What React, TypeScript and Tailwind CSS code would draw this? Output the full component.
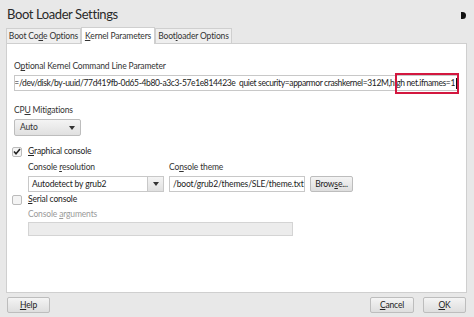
import React from "react";

const U = ({ children }: { children: React.ReactNode }) => (
  <span className="underline underline-offset-[1px]">{children}</span>
);

const Arrow = () => (
  <svg width="6" height="4" viewBox="0 0 6 4" className="fill-[#333]">
    <path d="M0 0h6L3 4z" />
  </svg>
);

const Check = () => (
  <svg width="8" height="7" viewBox="0 0 8 7" fill="none" stroke="#222" strokeWidth="1.6">
    <path d="M1 3.5l2 2.2L7 1" />
  </svg>
);

const Button = ({ children, w }: { children: React.ReactNode; w: string }) => (
  <div
    className={`${w} flex h-[16px] items-center justify-center rounded-[2px] border border-[#bdbdbd] bg-gradient-to-b from-[#f4f4f4] to-[#dedede] text-[#222]`}
  >
    {children}
  </div>
);

export default function App() {
  return (
    <div className="flex h-[317px] w-[474px] flex-col overflow-hidden bg-[#e8e8e8] font-['Lato',sans-serif] text-[8.5px] tracking-[-0.15px] text-[#333]">
      {/* title */}
      <div className="flex h-[27px] items-center justify-between pl-[7px] pr-[8px] pt-[3px]">
        <span className="text-[13px] tracking-[-0.4px] text-[#2a2a2a]">Boot Loader Settings</span>
        <div className="h-[7px] w-[5px] rounded-r-full bg-[#111]" />
      </div>

      {/* tabs */}
      <div className="flex h-[16px] items-end pl-[6px] leading-[11px] text-[#333]">
        <div className="flex h-[15px] w-[75px] items-center justify-center border border-b-0 border-[#cfcfcf] bg-[#efefef]">
          Boot Co<U>d</U>e Options
        </div>
        <div className="z-10 -mb-px flex h-[17px] w-[74px] items-center justify-center border border-b-0 border-[#cfcfcf] bg-white">
          <U>K</U>ernel Parameters
        </div>
        <div className="flex h-[15px] w-[77px] items-center justify-center border border-b-0 border-[#cfcfcf] bg-[#efefef]">
          Boot<U>l</U>oader Options
        </div>
      </div>

      {/* panel */}
      <div className="ml-[6px] mr-[7px] flex flex-1 flex-col border border-[#cfcfcf] bg-white px-[7px] pt-[17px] leading-[11px]">
        <div>
          O<U>p</U>tional Kernel Command Line Parameter
        </div>
        <div className="relative mt-[3px] flex h-[16px] items-center justify-end whitespace-nowrap border border-[#c8c8c8] pr-[1px]">
          <div className="flex flex-1 justify-end overflow-hidden">
            <span className="tracking-[-0.36px] text-[#222]">
              resume=/dev/disk/by-uuid/77d419fb-0d65-4b80-a3c3-57e1e814423e&nbsp; quiet security=apparmor
              crashkernel=312M,high net.ifnames=1
            </span>
          </div>
          <span className="ml-px h-[11px] w-px bg-[#111]" />
          <div className="absolute right-[-1px] top-[-3px] h-[21px] w-[64px] border-2 border-[#d3173f]" />
        </div>

        <div className="mt-[14px]">
          CP<U>U</U> Mitigations
        </div>
        <div className="mt-[3px] flex h-[17px] w-[67px] items-center justify-between rounded-[2px] border border-[#bdbdbd] bg-gradient-to-b from-[#f4f4f4] to-[#e0e0e0] px-[5px]">
          <span>Auto</span>
          <Arrow />
        </div>

        <div className="-ml-[2px] mt-[10px] flex items-center gap-[6px]">
          <div className="flex h-[10px] w-[10px] items-center justify-center rounded-[2px] border border-[#bbb] bg-[#f4f4f4]">
            <Check />
          </div>
          <span className="text-[#222]">
            <U>G</U>raphical console
          </span>
        </div>

        <div className="ml-[14px] mt-[5px] flex gap-[5px]">
          <div className="flex w-[136px] flex-col">
            <div>
              Console <U>r</U>esolution
            </div>
            <div className="mt-[3px] flex h-[16px] items-center border border-[#c8c8c8] bg-white">
              <span className="flex-1 pl-[3px] text-[#222]">Autodetect by grub2</span>
              <div className="flex h-full w-[16px] items-center justify-center border-l border-[#c8c8c8] bg-gradient-to-b from-[#f4f4f4] to-[#e0e0e0]">
                <Arrow />
              </div>
            </div>
          </div>
          <div className="flex flex-col">
            <div>
              Co<U>n</U>sole theme
            </div>
            <div className="mt-[3px] flex items-center gap-[5px]">
              <div className="flex h-[16px] w-[136px] items-center border border-[#c8c8c8] pl-[3px] text-[#222]">
                /boot/grub2/themes/SLE/theme.txt
              </div>
              <Button w="w-[43px]">
                Brow<U>s</U>e...
              </Button>
            </div>
          </div>
        </div>

        <div className="-ml-[2px] mt-[2px] flex items-center gap-[6px]">
          <div className="h-[10px] w-[10px] rounded-[2px] border border-[#bbb] bg-[#f4f4f4]" />
          <span className="text-[#222]">
            <U>S</U>erial console
          </span>
        </div>
        <div className="ml-[14px] mt-[4px] text-[#9a9a9a]">
          Console <U>a</U>rguments
        </div>
        <div className="ml-[14px] mt-[2px] h-[14px] w-[265px] border border-[#d4d4d4] bg-[#ececec]" />
      </div>

      {/* bottom */}
      <div className="flex h-[24px] items-center justify-between pl-[7px] pr-[8px]">
        <Button w="w-[43px]">
          <U>H</U>elp
        </Button>
        <div className="flex gap-[9px]">
          <Button w="w-[44px]">
            <U>C</U>ancel
          </Button>
          <Button w="w-[43px]">
            <U>O</U>K
          </Button>
        </div>
      </div>
    </div>
  );
}
